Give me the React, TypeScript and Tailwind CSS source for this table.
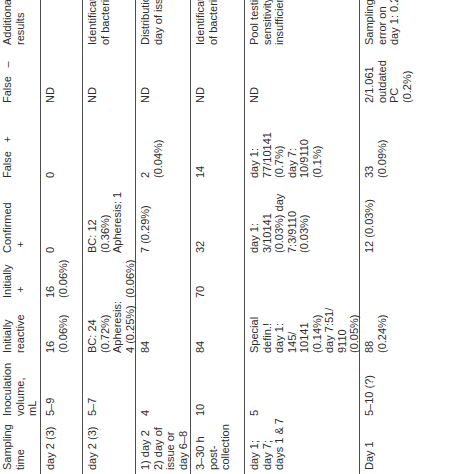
// @ts-nocheck
import React from "react";

type Cell = string[];

const colW = [
  "w-[54px]",
  "w-[63px]",
  "w-[55px]",
  "w-[45px]",
  "w-[75px]",
  "w-[75px]",
  "w-[58px]",
  "w-[90px]",
];

const header: Cell[] = [
  ["Sampling", "time"],
  ["Inoculation", "volume,", "mL"],
  ["Initially", "reactive"],
  ["Initially", "\u2002+"],
  ["Confirmed", "\u2002+"],
  ["False \u2002+"],
  ["False \u2002\u2013"],
  ["Additional", "results"],
];

const rows: { h: string; cells: Cell[] }[] = [
  {
    h: "h-[42px]",
    cells: [
      ["day 2 (3)"],
      ["5\u20139"],
      ["16", "(0.06%)"],
      ["16", "(0.06%)"],
      ["0"],
      ["0"],
      ["ND"],
      [],
    ],
  },
  {
    h: "h-[53px]",
    cells: [
      ["day 2 (3)"],
      ["5\u20137"],
      ["BC: 24", "(0.72%)", "Apheresis:", "4 (0.25%)"],
      ["\u00a0", "\u00a0", "\u00a0", "(0.06%)"],
      ["BC: 12", "(0.36%)", "Apheresis: 1"],
      [],
      ["ND"],
      ["Identification", "of bacteria"],
    ],
  },
  {
    h: "h-[55px]",
    cells: [
      ["1) day 2", "2) day of", "issue or", "day 6\u20138"],
      ["4"],
      ["84"],
      [],
      ["7 (0.29%)"],
      ["2", "(0.04%)"],
      ["ND"],
      ["Distribution on", "day of issue"],
    ],
  },
  {
    h: "h-[54px]",
    cells: [
      ["3\u201330 h", "post-", "collection"],
      ["10"],
      ["84"],
      ["70"],
      ["32"],
      ["14"],
      ["ND"],
      ["Identification", "of bacteria"],
    ],
  },
  {
    h: "h-[115px]",
    cells: [
      ["day 1;", "day 7;", "days 1 & 7"],
      ["5"],
      [
        "Special",
        "defin.!",
        "day 1:",
        "145/",
        "10141",
        "(0.14%)",
        "day 7:51/",
        "9110",
        "(0.05%)",
      ],
      [],
      ["day 1:", "3/10141", "(0.03%) day", "7:3/9110", "(0.03%)"],
      ["day 1:", "77/10141", "(0.7%)", "day 7:", "10/9110", "(0.1%)"],
      ["ND"],
      ["Pool testing", "sensitivity", "insufficient"],
    ],
  },
  {
    h: "h-[115px]",
    cells: [
      ["Day 1"],
      ["5\u201310 (?)"],
      ["88", "(0.24%)"],
      [],
      ["12 (0.03%)"],
      ["33", "(0.09%)"],
      ["2/1.061", "outdated", "PC", "(0.2%)"],
      ["Sampling", "error on", "day 1: 0.2%"],
    ],
  },
];

function Row({ cells, h, last, head }: { cells: Cell[]; h: string; last?: boolean; head?: boolean }) {
  return (
    <div
      className={`flex shrink-0 ${h} ${last ? "" : "border-b border-[#4e4e4e]"} ${
        head ? "pt-[1px]" : "pt-[3px]"
      }`}
    >
      {cells.map((lines, i) => (
        <div key={i} className={`${colW[i]} shrink-0 pl-[4px]`}>
          {lines.map((l, j) => (
            <div key={j} className="whitespace-nowrap">
              {l}
            </div>
          ))}
        </div>
      ))}
    </div>
  );
}

export default function App() {
  return (
    <div className="h-[474px] w-[474px] overflow-hidden bg-white">
      <div className="flex h-[474px] w-[474px] -rotate-90 flex-col font-['Liberation_Sans',Arial,sans-serif] text-[11px] leading-[12.5px] text-[#2e2e2e]">
        <Row cells={header} h="h-[41px]" head />
        {rows.map((r, i) => (
          <Row key={i} cells={r.cells} h={r.h} last={i === rows.length - 1} />
        ))}
      </div>
    </div>
  );
}
